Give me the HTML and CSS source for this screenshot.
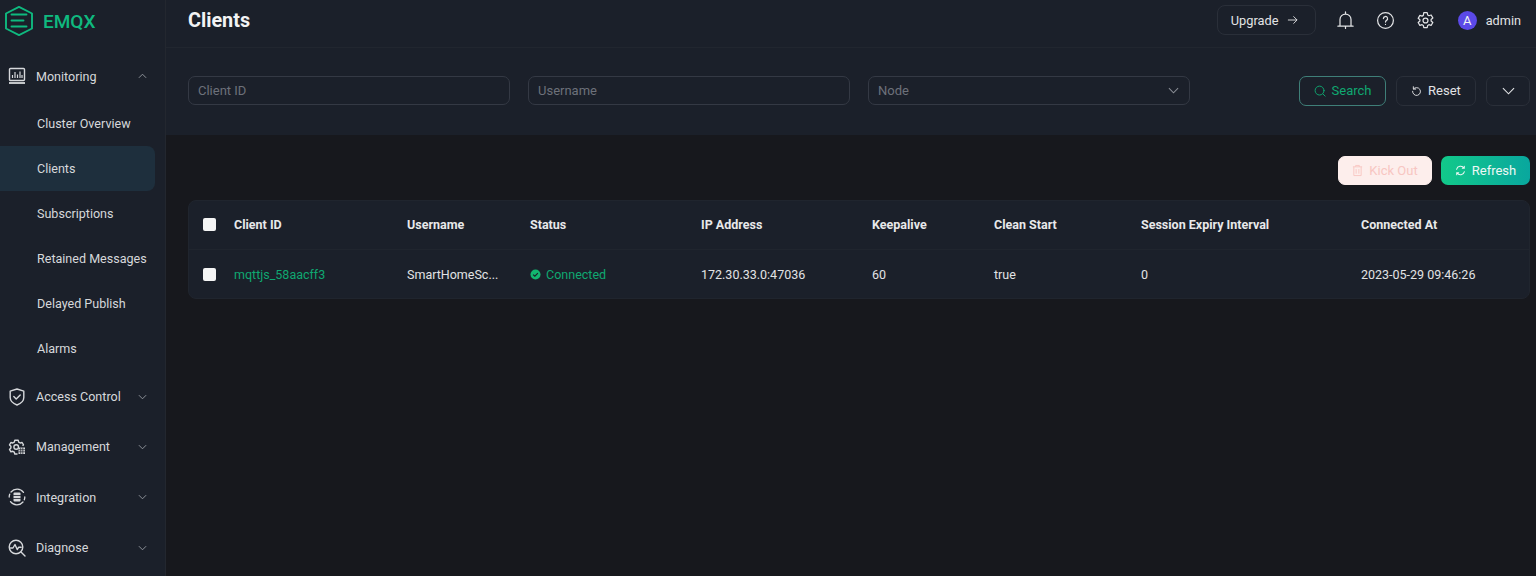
FILE: index.html
```html
<!DOCTYPE html>
<html lang="en">
<head>
  <meta charset="UTF-8" />
  <title>Clients - EMQX</title>
  <link rel="stylesheet" href="styles.css">
</head>
<body>
  <div class="app">
    <!-- Sidebar -->
    <aside class="sidebar">
      <div class="logo">
        <svg class="logo-icon" viewBox="0 0 28 30" width="28" height="30" fill="none" stroke="#0fb97f" stroke-width="1.9" stroke-linecap="round" stroke-linejoin="round">
          <path d="M14 .9 27 7.5v15l-13 6.6L1 22.5v-15z"/>
          <path d="M6.5 8.5h15M6.5 14.5h12M6.5 20.5h15"/>
        </svg>
        <span class="logo-text">EMQX</span>
      </div>
      <nav>
        <div class="nav-group">
          <svg class="nav-icon" viewBox="0 0 18 18" fill="none" stroke="currentColor" stroke-width="1.4">
            <rect x="1.5" y="1.5" width="15" height="12" rx="1"/>
            <path d="M1 16h16" stroke-width="1.8"/>
            <path d="M4.5 11V8M7 11V5M9.5 11V7.5M12 11V4.5M14 11V8" stroke-width="1.2"/>
          </svg>
          <span class="nav-label">Monitoring</span>
          <svg class="chevron" viewBox="0 0 10 6" fill="none" stroke="currentColor" stroke-width="1"><path d="M1 5l4-4 4 4"/></svg>
        </div>
        <a class="nav-sub">Cluster Overview</a>
        <a class="nav-sub active">Clients</a>
        <a class="nav-sub">Subscriptions</a>
        <a class="nav-sub">Retained Messages</a>
        <a class="nav-sub">Delayed Publish</a>
        <a class="nav-sub">Alarms</a>
        <div class="nav-group">
          <svg class="nav-icon" viewBox="0 0 18 18" fill="none" stroke="currentColor" stroke-width="1.4" stroke-linejoin="round" stroke-linecap="round">
            <path d="M9 1 15.8 3.2v6.2c0 3.6-3 6-6.8 7.6-3.8-1.6-6.8-4-6.8-7.6V3.2z"/>
            <path d="M5.8 8.6l2.4 2.4L12.2 7"/>
          </svg>
          <span class="nav-label">Access Control</span>
          <svg class="chevron" viewBox="0 0 10 6" fill="none" stroke="currentColor" stroke-width="1"><path d="M1 1l4 4 4-4"/></svg>
        </div>
        <div class="nav-group">
          <svg class="nav-icon" viewBox="0 0 18 18" fill="none" stroke="currentColor" stroke-width="1.4" stroke-linejoin="round">
            <path d="M9.5 16H6.8l-.5-1.8-1.5-.9-1.9.5-1.4-2.4 1.4-1.4V8.3L1.5 6.9l1.4-2.4 1.9.5 1.5-.9.5-1.8h3.4l.5 1.8 1.5.9 1.9-.5 1.4 2.4-.9 1"/>
            <circle cx="8.2" cy="9" r="2.3"/>
            <rect x="10.5" y="9.5" width="6.5" height="6.5" fill="currentColor" stroke="none"/>
            <path d="M10.5 11.7h6.5M10.5 13.8h6.5M12.7 9.5V16M14.8 9.5V16" stroke="#1b202a" stroke-width=".7"/>
          </svg>
          <span class="nav-label">Management</span>
          <svg class="chevron" viewBox="0 0 10 6" fill="none" stroke="currentColor" stroke-width="1"><path d="M1 1l4 4 4-4"/></svg>
        </div>
        <div class="nav-group">
          <svg class="nav-icon" viewBox="0 0 18 18" fill="none" stroke="currentColor" stroke-width="1.3" stroke-linecap="round">
            <path d="M3 4a8 8 0 0 1 12.5.4M15 14a8 8 0 0 1-12.5-.4M1.2 9a8 8 0 0 1 .5-2.8M16.8 9a8 8 0 0 1-.5 2.8"/>
            <rect x="5.5" y="4.5" width="7" height="9" rx="1" fill="currentColor" stroke="none"/>
            <path d="M5.5 7.5h7M5.5 10.5h7" stroke="#1b202a" stroke-width=".8"/>
          </svg>
          <span class="nav-label">Integration</span>
          <svg class="chevron" viewBox="0 0 10 6" fill="none" stroke="currentColor" stroke-width="1"><path d="M1 1l4 4 4-4"/></svg>
        </div>
        <div class="nav-group">
          <svg class="nav-icon" viewBox="0 0 18 18" fill="none" stroke="currentColor" stroke-width="1.4" stroke-linecap="round" stroke-linejoin="round">
            <circle cx="8" cy="8" r="6.8"/>
            <path d="M13 13l4 4M2.5 9h2.5L7 5.5l2.2 5 1.4-2.2h2.6"/>
          </svg>
          <span class="nav-label">Diagnose</span>
          <svg class="chevron" viewBox="0 0 10 6" fill="none" stroke="currentColor" stroke-width="1"><path d="M1 1l4 4 4-4"/></svg>
        </div>
      </nav>
    </aside>

    <div class="main">
      <!-- Top bar -->
      <header class="topbar">
        <h1>Clients</h1>
        <div class="top-actions">
          <button class="upgrade">Upgrade
            <svg viewBox="0 0 12 10" width="11" height="10" fill="none" stroke="currentColor" stroke-width="1"><path d="M1 5h10M7 1l4 4-4 4"/></svg>
          </button>
          <svg class="top-icon bell" viewBox="0 0 20 20" fill="none" stroke="currentColor" stroke-width="1.3" stroke-linecap="round" stroke-linejoin="round">
            <path d="M2 16h16M4.2 16V9a5.8 5.8 0 0 1 11.6 0v7M10 1v2.2M10 16v2.4"/>
          </svg>
          <svg class="top-icon help" viewBox="0 0 20 20" fill="none" stroke="currentColor" stroke-width="1.3" stroke-linecap="round">
            <circle cx="10" cy="10" r="8.3"/>
            <path d="M7.8 8a2.2 2.2 0 1 1 3.3 1.9c-.7.4-1.1.8-1.1 1.7M10 14v.1"/>
          </svg>
          <svg class="top-icon gear" viewBox="0 0 20 20" fill="none" stroke="currentColor" stroke-width="1.3" stroke-linejoin="round">
            <path d="M8.2 1.8h3.6l.5 2.4 1.3.8 2.3-.8 1.8 3.1-1.8 1.6v1.6l1.8 1.6-1.8 3.1-2.3-.8-1.3.8-.5 2.4H8.2l-.5-2.4-1.3-.8-2.3.8-1.8-3.1 1.8-1.6V9.3L2.3 7.7l1.8-3.1 2.3.8 1.3-.8z"/>
            <circle cx="10" cy="10" r="2.6"/>
          </svg>
          <div class="user">
            <span class="avatar">A</span>
            <span>admin</span>
          </div>
        </div>
      </header>

      <!-- Search filters -->
      <section class="filters">
        <div class="fields">
          <div class="field">Client ID</div>
          <div class="field">Username</div>
          <div class="field">Node
            <svg viewBox="0 0 12 7" width="11" height="7" fill="none" stroke="#8a8e96" stroke-width="1.1"><path d="M1 1l5 5 5-5"/></svg>
          </div>
        </div>
        <div class="filter-actions">
          <button class="btn btn-search">
            <svg viewBox="0 0 14 14" width="12" height="12" fill="none" stroke="currentColor" stroke-width="1.1" stroke-linecap="round"><circle cx="6.5" cy="6.5" r="5.2"/><path d="M10.5 10.5l2.5 2.5"/></svg>
            Search
          </button>
          <button class="btn btn-reset">
            <svg viewBox="0 0 14 14" width="11" height="11" fill="none" stroke="currentColor" stroke-width="1.2" stroke-linecap="round"><path d="M3 2.2v3h3M3.2 5A5 5 0 1 1 2 8"/></svg>
            Reset
          </button>
          <button class="btn btn-more">
            <svg viewBox="0 0 14 8" width="13" height="8" fill="none" stroke="currentColor" stroke-width="1.2"><path d="M1 1l6 6 6-6"/></svg>
          </button>
        </div>
      </section>

      <!-- Client table -->
      <section class="content">
        <div class="table-actions">
          <button class="btn btn-kick">
            <svg viewBox="0 0 12 14" width="11" height="13" fill="none" stroke="currentColor" stroke-width="1"><path d="M1 3h10M4 3V1.5h4V3M2 3v9.5h8V3M4.5 5.5v5M7.5 5.5v5"/></svg>
            Kick Out
          </button>
          <button class="btn btn-refresh">
            <svg viewBox="0 0 14 14" width="11" height="11" fill="none" stroke="currentColor" stroke-width="1.3" stroke-linecap="round"><path d="M2 5.5A5.2 5.2 0 0 1 11.5 4M12 8.5A5.2 5.2 0 0 1 2.5 10M11.8 1.5V4H9.3M2.2 12.5V10h2.5"/></svg>
            Refresh
          </button>
        </div>
        <table class="clients">
          <colgroup>
            <col class="c-check"><col class="c-id"><col class="c-user"><col class="c-status"><col class="c-ip"><col class="c-keep"><col class="c-clean"><col class="c-expiry"><col>
          </colgroup>
          <thead>
            <tr>
              <th><span class="check"></span></th>
              <th>Client ID</th>
              <th>Username</th>
              <th>Status</th>
              <th>IP Address</th>
              <th>Keepalive</th>
              <th>Clean Start</th>
              <th>Session Expiry Interval</th>
              <th>Connected At</th>
            </tr>
          </thead>
          <tbody>
            <tr>
              <td><span class="check"></span></td>
              <td class="link">mqttjs_58aacff3</td>
              <td>SmartHomeSc...</td>
              <td class="online">
                <svg viewBox="0 0 12 12" width="11" height="11"><circle cx="6" cy="6" r="5.5" fill="#12b76f"/><path d="M3.4 6.1l1.9 1.8 3.3-3.4" fill="none" stroke="#1b202a" stroke-width="1.3"/></svg>
                Connected
              </td>
              <td>172.30.33.0:47036</td>
              <td>60</td>
              <td>true</td>
              <td>0</td>
              <td>2023-05-29 09:46:26</td>
            </tr>
          </tbody>
        </table>
      </section>
    </div>
  </div>
</body>
</html>
```

FILE: styles.css
```css
/* Base */
html, body {
  margin: 0;
  height: 100%;
  overflow: hidden;
}
body {
  font-family: Roboto, "Liberation Sans", sans-serif;
  font-size: 13px;
  color: #e2e3e5;
  background: #17181d;
}
button {
  font-family: inherit;
  font-size: 13px;
}

.app {
  display: flex;
  height: 576px;
}

/* Sidebar */
.sidebar {
  width: 166px;
  flex: none;
  box-sizing: border-box;
  background: #1b202a;
  border-right: 1px solid #23272f;
  font-size: 12.55px;
}
.logo {
  display: flex;
  align-items: center;
  height: 51px;
  padding: 0 0 9px 5px;
  box-sizing: border-box;
}
.logo-text {
  margin-left: 10px;
  font-size: 19px;
  font-weight: 500;
  color: #0fb97f;
}
.nav-group {
  display: flex;
  align-items: center;
  height: 50.4px;
  padding-left: 8px;
  color: #d6d8db;
}
.nav-icon {
  width: 18px;
  height: 18px;
  flex: none;
}
.nav-label {
  margin-left: 10px;
  flex: 1;
}
.chevron {
  width: 9px;
  height: 6px;
  margin-right: 18px;
  color: #9a9ea5;
}
.nav-sub {
  display: block;
  height: 45px;
  line-height: 45px;
  padding-left: 37px;
  width: 155px;
  box-sizing: border-box;
  color: #d6d8db;
}
.nav-sub.active {
  background: #1e2f3d;
  border-radius: 0 8px 8px 0;
}

/* Main column */
.main {
  flex: 1;
  min-width: 0;
  display: flex;
  flex-direction: column;
}
.topbar {
  height: 48px;
  box-sizing: border-box;
  display: flex;
  align-items: center;
  justify-content: space-between;
  padding: 0 15px 7px 22px;
  background: #1b202a;
  border-bottom: 1px solid #21262f;
}
.topbar h1 {
  margin: 0;
  font-size: 19.8px;
  font-weight: 700;
  color: #f2f3f4;
}
.top-actions {
  display: flex;
  align-items: center;
}
.upgrade {
  display: flex;
  align-items: center;
  gap: 9px;
  height: 30px;
  width: 99px;
  box-sizing: border-box;
  padding: 0 0 0 13px;
  margin-right: 20px;
  font-size: 12.8px;
  color: #e2e3e5;
  background: transparent;
  border: 1px solid #2a2f39;
  border-radius: 8px;
}
.top-icon {
  width: 19px;
  height: 19px;
  margin-right: 21px;
  color: #e2e3e5;
}
.top-icon.gear {
  margin-right: 23px;
}
.user {
  display: flex;
  align-items: center;
  gap: 9px;
  font-size: 12.7px;
}
.avatar {
  width: 19px;
  height: 19px;
  border-radius: 50%;
  background: #5b49e8;
  color: #f2f3f4;
  text-align: center;
  line-height: 19px;
  font-size: 13px;
}

/* Filters */
.filters {
  height: 87px;
  box-sizing: border-box;
  display: flex;
  align-items: center;
  justify-content: space-between;
  padding: 0 6px 2px 22px;
  background: #1b202a;
}
.fields {
  display: flex;
  gap: 18px;
}
.field {
  width: 322px;
  height: 29px;
  box-sizing: border-box;
  display: flex;
  align-items: center;
  justify-content: space-between;
  padding: 0 10px 0 9px;
  border: 1px solid #343944;
  border-radius: 7px;
  color: #6d717a;
}
.filter-actions {
  display: flex;
  gap: 10px;
}
.btn {
  display: flex;
  align-items: center;
  justify-content: center;
  gap: 6px;
  height: 30px;
  box-sizing: border-box;
  padding: 0;
  background: transparent;
  border: 1px solid #2a2f39;
  border-radius: 7px;
  color: #e2e3e5;
}
.btn-search {
  width: 87px;
  color: #0fa871;
  border: 1.5px solid #3f7f78;
}
.btn-reset {
  width: 80px;
}
.btn-more {
  width: 44px;
}

/* Table area */
.content {
  flex: 1;
  padding: 21px 6px 0 22px;
}
.table-actions {
  display: flex;
  justify-content: flex-end;
  gap: 9px;
  margin-bottom: 15px;
}
.table-actions .btn {
  height: 29px;
}
.btn-kick {
  width: 94px;
  background: #fdeeec;
  border-color: #fdeeec;
  color: #f8c6c2;
}
.btn-refresh {
  width: 89px;
  border: none;
  color: #eef8f5;
  background: linear-gradient(90deg, #12c98a, #09a79e);
}
.clients {
  width: 100%;
  table-layout: fixed;
  border-collapse: separate;
  border-spacing: 0;
  background: #1b202a;
  border: 1px solid #20252e;
  border-radius: 8px;
}
.c-check { width: 45px; }
.c-id { width: 173px; }
.c-user { width: 123px; }
.c-status { width: 171px; }
.c-ip { width: 171px; }
.c-keep { width: 122px; }
.c-clean { width: 147px; }
.c-expiry { width: 220px; }
.clients th,
.clients td {
  height: 48px;
  padding: 0;
  text-align: left;
  white-space: nowrap;
}
.clients th {
  height: 46px;
  padding-bottom: 2px;
  font-weight: 700;
  font-size: 12.5px;
  color: #e8e9ea;
  border-bottom: 1px solid #20252e;
}
.clients td {
  font-size: 12.5px;
  color: #e2e3e5;
}
.check {
  display: block;
  width: 13px;
  height: 13px;
  margin-left: 14px;
  background: #f5f5f5;
  border-radius: 2px;
}
.clients .link {
  color: #0fa871;
}
.clients .online {
  color: #0fa871;
}
.online svg {
  vertical-align: -1px;
  margin-right: 2px;
}
```
